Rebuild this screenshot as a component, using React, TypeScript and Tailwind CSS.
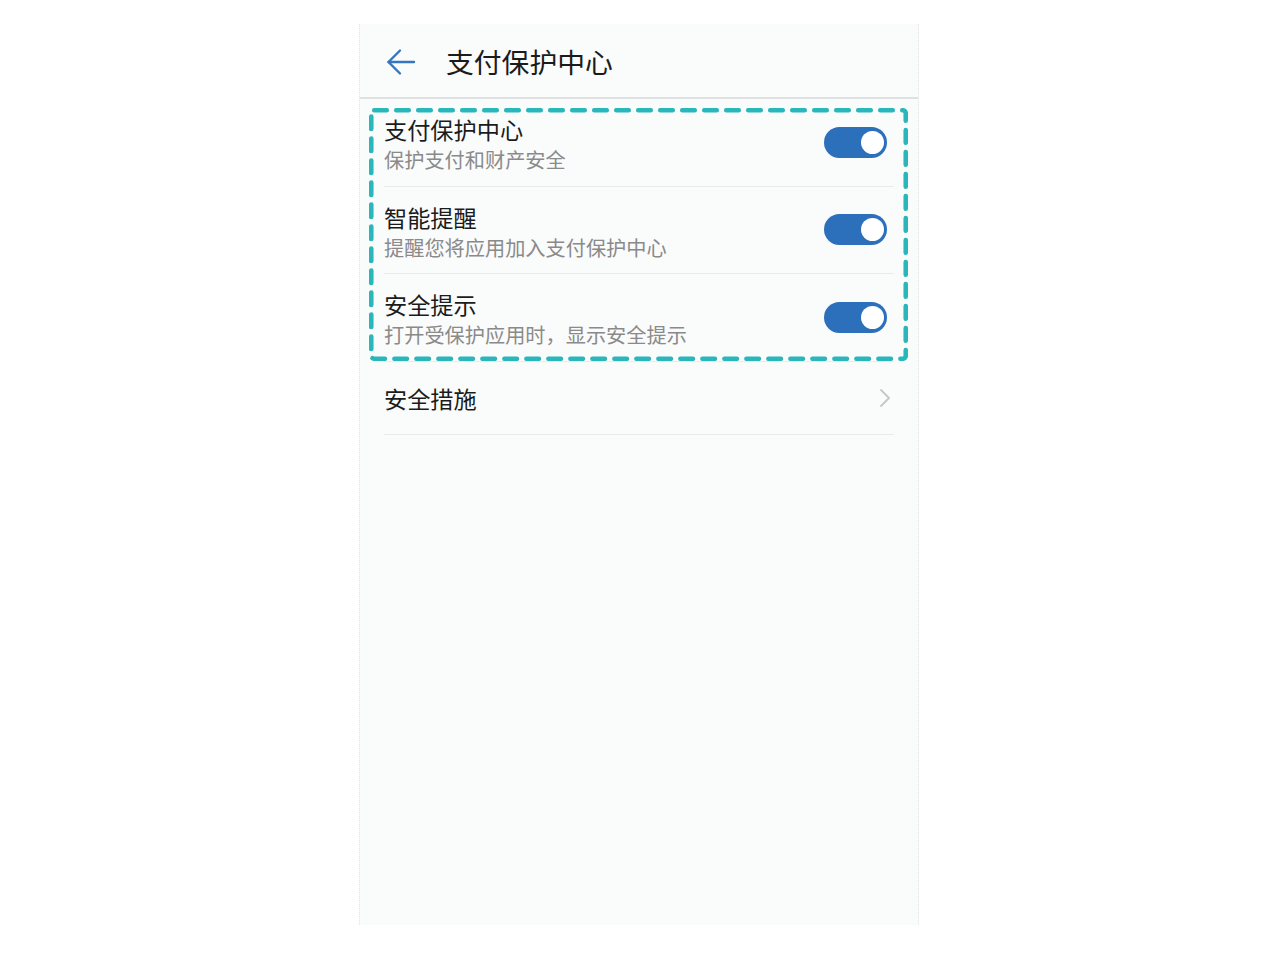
import React from "react";

const FONT = '"Noto Sans CJK SC", "Noto Sans", sans-serif';

type ToggleRow = { title: string; desc: string };

const rows: ToggleRow[] = [
  { title: "支付保护中心", desc: "保护支付和财产安全" },
  { title: "智能提醒", desc: "提醒您将应用加入支付保护中心" },
  { title: "安全提示", desc: "打开受保护应用时，显示安全提示" },
];

function Switch() {
  return (
    <div className="flex h-[31px] w-[63px] items-center justify-end rounded-full bg-[#2c6fbb] pr-[3px]">
      <div className="h-[23px] w-[23px] rounded-full bg-white" />
    </div>
  );
}

export default function App() {
  return (
    <div className="flex min-h-screen justify-center bg-white pr-[1px] pt-[24px]" style={{ fontFamily: FONT }}>
      <div className="flex h-[901px] w-[560px] flex-col border-x border-dotted border-[#e2e4e4] bg-[#fafbfb]">
        {/* title bar */}
        <div className="flex h-[73px] items-center pl-[26px] pt-[3px]">
          <svg width="30" height="30" viewBox="0 0 30 30" fill="none" stroke="#3576c2" strokeWidth="2.4" strokeLinecap="round" strokeLinejoin="round">
            <path d="M28 15H2.5" />
            <path d="M14 3.5L2.5 15L14 26.5" />
          </svg>
          <span className="ml-[30px] text-[27.8px] leading-none text-[#1b1b1b]">支付保护中心</span>
        </div>
        <div className="h-[2px] bg-[#dfe0e0]" />

        {/* settings list */}
        <div className="relative">
          {rows.map((r) => (
            <div key={r.title} className="mx-[24px] flex h-[87.5px] items-center justify-between border-b border-[#e9eaea] pt-[4px]">
              <div className="flex flex-col">
                <span className="text-[23.2px] leading-[30px] text-[#1b1b1b]">{r.title}</span>
                <span className="mt-[2px] text-[20.2px] leading-[28px] text-[#8a8a8a]">{r.desc}</span>
              </div>
              <div className="mr-[7px] -mt-[4px]">
                <Switch />
              </div>
            </div>
          ))}
          <div className="mx-[24px] flex h-[73px] items-center justify-between border-b border-[#e9eaea]">
            <span className="text-[23.2px] leading-[30px] text-[#1b1b1b]">安全措施</span>
            <svg width="14" height="20" viewBox="0 0 14 20" fill="none" stroke="#c6c6c6" strokeWidth="1.8" strokeLinecap="round" strokeLinejoin="round" className="mr-[2px]">
              <path d="M3 2l8 8-8 8" />
            </svg>
          </div>

          {/* highlight frame around the switch group */}
          <svg className="pointer-events-none absolute left-[9px] top-[9px]" width="539" height="253" viewBox="0 0 539 253" fill="none">
            <rect x="2.25" y="2.25" width="534.5" height="248.5" rx="3" stroke="#29b7bb" strokeWidth="4.6" strokeDasharray="12.5 9.5" strokeLinecap="round" />
          </svg>
        </div>
      </div>
    </div>
  );
}
